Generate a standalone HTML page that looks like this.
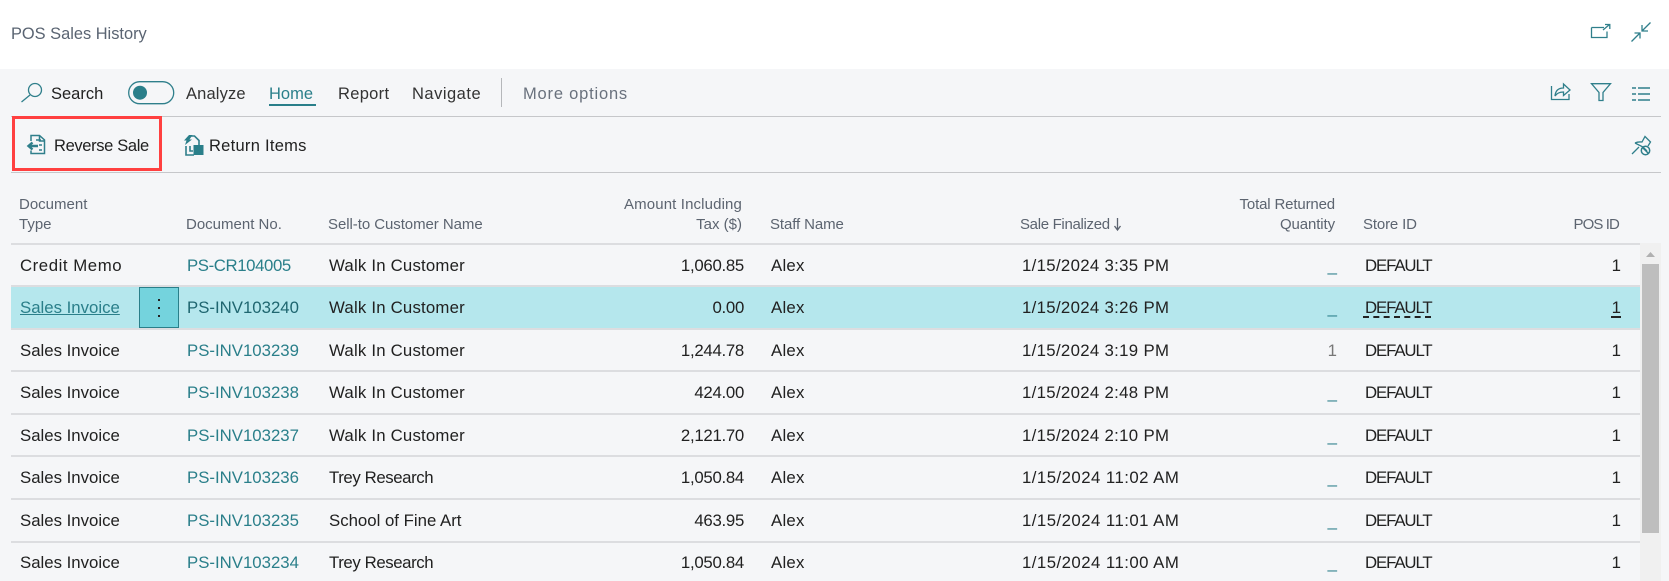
<!DOCTYPE html>
<html><head><meta charset="utf-8"><style>
html,body{margin:0;padding:0;width:1669px;height:581px;overflow:hidden;background:#f5f6f8}
body{position:relative;font-family:"Liberation Sans",sans-serif;color:#212121}
.a{position:absolute;white-space:nowrap}
.t{font-size:16.5px;line-height:22px;height:22px}
.h{font-size:15px;line-height:20px;color:#5c6470}
.c{font-size:16.8px;line-height:22px;height:22px}
.l{color:#2a7f8a}
.r{text-align:right}
.d{letter-spacing:.32px}
.dl{letter-spacing:.46px}
.w{letter-spacing:.2px}
.tr{letter-spacing:-.4px}
.n{letter-spacing:-.28px}
.df{letter-spacing:-1.1px}
.x{letter-spacing:.25px}
.line{position:absolute;height:2px;background:#dcdde0;left:11px;width:1629px}
svg{position:absolute;overflow:visible;fill:none;stroke:#2f7f8b;stroke-width:1.3}
</style></head><body>
<div class="a" style="left:0;top:0;width:1669px;height:69px;background:#fff"></div>
<div class="a" style="left:11px;top:22px;font-size:16.4px;line-height:24px;color:#5a6472">POS Sales History</div>

<svg style="left:0;top:0" width="1669" height="180">
<circle cx="35" cy="90" r="6.5"/><path d="M30 95L21.500 102"/>
<rect x="128.700" y="81.700" width="45" height="22" rx="11"/>
<circle cx="140" cy="92.700" r="7" fill="#2a7f8a" stroke="none"/>
<path d="M1591.500 27.500H1604M1591.500 27.500V37.500H1607V31.500M1603 30L1609.500 24.500M1605 24.500H1609.800V29"/>
<path d="M1650.500 22.500L1642 31M1642 25V31H1648M1631.500 41.500L1640 33M1634.500 33H1640V38.500"/>
<path d="M1551.500 86V99.500H1569V94M1555 96C1555.500 90 1559 88 1563.500 88V84L1570 90L1563.500 95.500V92C1560 92 1557 93 1555 96Z"/>
<path d="M1591.500 83.700H1610.500L1603 92.500V100.500H1599V92.500Z"/>
<path d="M1632 88H1636M1638 88H1650M1632 94H1636M1638 94H1650M1632 100H1636M1638 100H1650" stroke-width="1.400"/>
<path d="M1632 154L1639 147M1635 143L1643 147L1647 151M1635 143C1638 141.500 1640 142 1642 142L1645 136.500L1650.500 142L1648 146"/>
<circle cx="1645.500" cy="150.500" r="4.200" stroke-width="1.500"/><path d="M1642.500 147.500L1648.500 153.500" stroke-width="1.500"/>
<path d="M31 141V135.500H39.500L44.500 140V153.500H31V150.500M39.500 136V141H44.500M36 140H41M39 145H42M39 150H42" stroke-width="1.500"/>
<path d="M29 146H38M32.500 142.500L28.500 146L32.500 149.500" stroke-width="2.400"/>
<path d="M191 136L194.500 136L199 140.500V145M186 146V155H194M190 146V151H193" stroke-width="1.600"/>
<path d="M189 135H192.500L189.500 139.500H192L185 145L186.500 140.500H184Z" fill="#2a7f8a" stroke="none"/>
<rect x="193.500" y="145" width="10" height="10" fill="#2a7f8a" stroke="none"/>
</svg>

<div class="a t" style="left:51px;top:83px">Search</div>
<div class="a t" style="left:186px;top:83px;color:#333;letter-spacing:.15px">Analyze</div>
<div class="a t l" style="left:269px;top:83px">Home</div>
<div class="a" style="left:269px;top:104px;width:47px;height:2px;background:#2a7f8a"></div>
<div class="a t" style="left:338px;top:83px;color:#333;letter-spacing:.3px">Report</div>
<div class="a t" style="left:412px;top:83px;color:#333;letter-spacing:.5px">Navigate</div>
<div class="a" style="left:501px;top:78px;width:1px;height:29px;background:#b5b7ba"></div>
<div class="a t" style="left:523px;top:83px;color:#69717d;letter-spacing:.8px">More options</div>
<div class="a" style="left:11px;top:116px;width:1650px;height:1px;background:#c6c7ca"></div>
<div class="a" style="left:11px;top:172px;width:1650px;height:1px;background:#c6c7ca"></div>
<div class="a" style="left:12px;top:116px;width:144px;height:49px;border:3px solid #ff4040"></div>
<div class="a t" style="left:54px;top:135px;letter-spacing:-.35px">Reverse Sale</div>
<div class="a t" style="left:209px;top:135px;letter-spacing:.27px">Return Items</div>

<div class="a h" style="left:19px;top:195px">Document</div>
<div class="a h" style="left:19px;top:215px">Type</div>
<div class="a h" style="left:186px;top:215px">Document No.</div>
<div class="a h" style="left:328px;top:215px;letter-spacing:-.06px">Sell-to Customer Name</div>
<div class="a h r" style="right:927px;top:195px;letter-spacing:.13px">Amount Including</div>
<div class="a h r" style="right:927px;top:215px">Tax ($)</div>
<div class="a h" style="left:770px;top:215px;letter-spacing:-.1px">Staff Name</div>
<div class="a h" style="left:1020px;top:215px;letter-spacing:-.32px">Sale Finalized</div>
<svg style="left:0;top:0" width="1669" height="240"><path d="M1117.500 218V229M1114.500 226L1117.500 230L1120.500 226" stroke="#5c6470"/></svg>
<div class="a h r" style="right:334px;top:195px;letter-spacing:-.15px">Total Returned</div>
<div class="a h r" style="right:334px;top:215px;letter-spacing:-.1px">Quantity</div>
<div class="a h" style="left:1363px;top:215px;letter-spacing:-.15px">Store ID</div>
<div class="a h r" style="right:50px;top:215px;letter-spacing:-.9px">POS ID</div>

<div class="line" style="top:243px"></div>
<div class="a" style="left:11px;top:287px;width:1629px;height:41px;background:#b5e7ed"></div>
<div class="line" style="top:285px"></div>
<div class="line" style="top:328px"></div>
<div class="line" style="top:370px"></div>
<div class="line" style="top:413px"></div>
<div class="line" style="top:455px"></div>
<div class="line" style="top:498px"></div>
<div class="line" style="top:541px"></div>

<div class="a" style="left:139px;top:287px;width:38px;height:39px;background:#74d3dd;border:1px solid #2a7f8a"></div>
<div class="a" style="left:158px;top:299px;width:2px;height:2px;background:#222"></div>
<div class="a" style="left:158px;top:307px;width:2px;height:2px;background:#222"></div>
<div class="a" style="left:158px;top:315px;width:2px;height:2px;background:#222"></div>

<div class="a" style="left:1640px;top:243px;width:21px;height:338px;background:#f0f0f0"></div>
<div class="a" style="left:1642px;top:264px;width:17px;height:269px;background:#bebebe"></div>
<svg style="left:0;top:0" width="1669" height="300"><path d="M1646 257H1655L1650.500 252Z" fill="#b0b0b0" stroke="none"/></svg>

<div class="a c" style="left:20px;top:255px;letter-spacing:.55px">Credit Memo</div><div class="a c l" style="left:187px;top:255px;letter-spacing:-.4px">PS-CR104005</div><div class="a c w" style="left:329px;top:255px">Walk In Customer</div><div class="a c r n" style="right:925px;top:255px">1,060.85</div><div class="a c x" style="left:771px;top:255px">Alex</div><div class="a c d" style="left:1022px;top:255px">1/15/2024 3:35 PM</div><div class="a c l r" style="right:332px;top:255px">_</div><div class="a c df" style="left:1365px;top:255px">DEFAULT</div><div class="a c r" style="right:48px;top:255px">1</div>

<div class="a c l" style="left:20px;top:297px;text-decoration:underline">Sales Invoice</div><div class="a c l" style="left:187px;top:297px;color:#1f6670">PS-INV103240</div><div class="a c w" style="left:329px;top:297px">Walk In Customer</div><div class="a c r n" style="right:925px;top:297px">0.00</div><div class="a c x" style="left:771px;top:297px">Alex</div><div class="a c d" style="left:1022px;top:297px">1/15/2024 3:26 PM</div><div class="a c l r" style="right:332px;top:297px">_</div><div class="a c df" style="left:1365px;top:297px">DEFAULT</div><div class="a" style="left:1363px;top:316px;width:68px;border-top:2px dashed #222"></div><div class="a c r" style="right:48px;top:297px">1</div><div class="a" style="left:1611px;top:316px;width:10px;height:2px;background:#222"></div>

<div class="a c" style="left:20px;top:340px">Sales Invoice</div><div class="a c l" style="left:187px;top:340px">PS-INV103239</div><div class="a c w" style="left:329px;top:340px">Walk In Customer</div><div class="a c r n" style="right:925px;top:340px">1,244.78</div><div class="a c x" style="left:771px;top:340px">Alex</div><div class="a c d" style="left:1022px;top:340px">1/15/2024 3:19 PM</div><div class="a c r" style="right:332px;top:340px;color:#777">1</div><div class="a c df" style="left:1365px;top:340px">DEFAULT</div><div class="a c r" style="right:48px;top:340px">1</div>

<div class="a c" style="left:20px;top:382px">Sales Invoice</div><div class="a c l" style="left:187px;top:382px">PS-INV103238</div><div class="a c w" style="left:329px;top:382px">Walk In Customer</div><div class="a c r n" style="right:925px;top:382px">424.00</div><div class="a c x" style="left:771px;top:382px">Alex</div><div class="a c d" style="left:1022px;top:382px">1/15/2024 2:48 PM</div><div class="a c l r" style="right:332px;top:382px">_</div><div class="a c df" style="left:1365px;top:382px">DEFAULT</div><div class="a c r" style="right:48px;top:382px">1</div>

<div class="a c" style="left:20px;top:425px">Sales Invoice</div><div class="a c l" style="left:187px;top:425px">PS-INV103237</div><div class="a c w" style="left:329px;top:425px">Walk In Customer</div><div class="a c r n" style="right:925px;top:425px">2,121.70</div><div class="a c x" style="left:771px;top:425px">Alex</div><div class="a c d" style="left:1022px;top:425px">1/15/2024 2:10 PM</div><div class="a c l r" style="right:332px;top:425px">_</div><div class="a c df" style="left:1365px;top:425px">DEFAULT</div><div class="a c r" style="right:48px;top:425px">1</div>

<div class="a c" style="left:20px;top:467px">Sales Invoice</div><div class="a c l" style="left:187px;top:467px">PS-INV103236</div><div class="a c tr" style="left:329px;top:467px">Trey Research</div><div class="a c r n" style="right:925px;top:467px">1,050.84</div><div class="a c x" style="left:771px;top:467px">Alex</div><div class="a c dl" style="left:1022px;top:467px">1/15/2024 11:02 AM</div><div class="a c l r" style="right:332px;top:467px">_</div><div class="a c df" style="left:1365px;top:467px">DEFAULT</div><div class="a c r" style="right:48px;top:467px">1</div>

<div class="a c" style="left:20px;top:510px">Sales Invoice</div><div class="a c l" style="left:187px;top:510px">PS-INV103235</div><div class="a c" style="left:329px;top:510px">School of Fine Art</div><div class="a c r n" style="right:925px;top:510px">463.95</div><div class="a c x" style="left:771px;top:510px">Alex</div><div class="a c dl" style="left:1022px;top:510px">1/15/2024 11:01 AM</div><div class="a c l r" style="right:332px;top:510px">_</div><div class="a c df" style="left:1365px;top:510px">DEFAULT</div><div class="a c r" style="right:48px;top:510px">1</div>

<div class="a c" style="left:20px;top:552px">Sales Invoice</div><div class="a c l" style="left:187px;top:552px">PS-INV103234</div><div class="a c tr" style="left:329px;top:552px">Trey Research</div><div class="a c r n" style="right:925px;top:552px">1,050.84</div><div class="a c x" style="left:771px;top:552px">Alex</div><div class="a c dl" style="left:1022px;top:552px">1/15/2024 11:00 AM</div><div class="a c l r" style="right:332px;top:552px">_</div><div class="a c df" style="left:1365px;top:552px">DEFAULT</div><div class="a c r" style="right:48px;top:552px">1</div>
</body></html>
